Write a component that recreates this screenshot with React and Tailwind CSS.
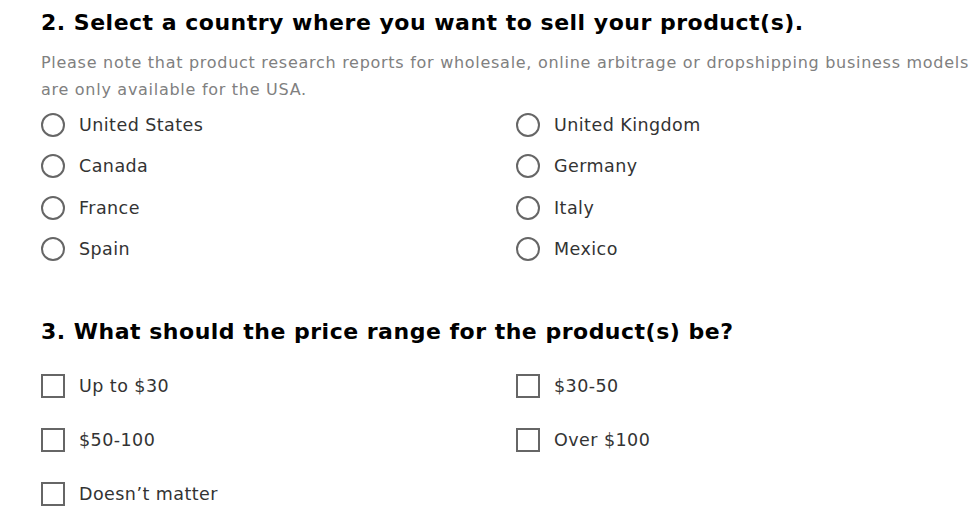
import React from "react";

const font = { fontFamily: '"DejaVu Sans", "Open Sans", sans-serif' };

function Radio({ label }) {
  return (
    <label className="flex h-[41.5px] items-center">
      <span className="box-border h-[24px] w-[24px] shrink-0 rounded-full border-2 border-[#666666] bg-white" />
      <span className="ml-[14px] text-[17.5px] tracking-[0.45px] text-[#333333]">{label}</span>
    </label>
  );
}

function Check({ label }) {
  return (
    <label className="flex h-[54px] items-center">
      <span className="box-border h-[24px] w-[24px] shrink-0 border-2 border-[#666666] bg-white" />
      <span className="ml-[14px] text-[17.5px] tracking-[0.45px] text-[#333333]">{label}</span>
    </label>
  );
}

export default function App() {
  return (
    <div className="h-[517px] w-[977px] overflow-hidden bg-white pl-[41px]" style={font}>
      <h2 className="pt-[9px] text-[22px] font-bold leading-[28px] tracking-[0.5px] text-black whitespace-nowrap">
        2. Select a country where you want to sell your product(s).
      </h2>
      <p className="mt-[12px] w-[936px] text-[16px] leading-[27px] tracking-[0.72px] text-[#808080]">
        Please note that product research reports for wholesale, online arbitrage or dropshipping business models are only available for the USA.
      </p>
      <div className="mt-[1px] grid grid-cols-[475px_1fr]">
        <Radio label="United States" />
        <Radio label="United Kingdom" />
        <Radio label="Canada" />
        <Radio label="Germany" />
        <Radio label="France" />
        <Radio label="Italy" />
        <Radio label="Spain" />
        <Radio label="Mexico" />
      </div>
      <h2 className="mt-[48px] text-[22px] font-bold leading-[28px] tracking-[0.5px] text-black whitespace-nowrap">
        3. What should the price range for the product(s) be?
      </h2>
      <div className="mt-[13px] grid grid-cols-[475px_1fr]">
        <Check label="Up to $30" />
        <Check label="$30-50" />
        <Check label="$50-100" />
        <Check label="Over $100" />
        <Check label="Doesn’t matter" />
      </div>
    </div>
  );
}
